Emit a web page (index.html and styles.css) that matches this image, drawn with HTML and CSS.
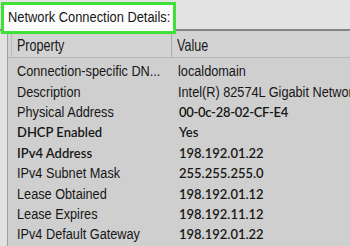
FILE: index.html
```html
<!DOCTYPE html>
<html>
<head>
<meta charset="utf-8">
<link rel="stylesheet" href="styles.css">
</head>
<body>
<div class="window">
  <div class="top">
    <div class="title"><span class="sq-title">Network Connection Details:</span></div>
  </div>
  <div class="main">
    <div class="strip"></div>
    <div class="table">
      <div class="head">
        <div class="hcell prop"><span class="sq-head">Property</span></div>
        <div class="hcell val"><span class="sq-head">Value</span></div>
      </div>
      <div class="rows">
        <div class="row"><span class="p"><span class="sq">Connection-specific DN...</span></span><span class="v"><span class="sq">localdomain</span></span></div>
        <div class="row"><span class="p"><span class="sq">Description</span></span><span class="v"><span class="sq">Intel(R) 82574L Gigabit Network Connection</span></span></div>
        <div class="row"><span class="p"><span class="sq">Physical Address</span></span><span class="v lato hex">00-0c-28-02-CF-E4</span></div>
        <div class="row"><span class="p lato-p">DHCP Enabled</span><span class="v lato">Yes</span></div>
        <div class="row"><span class="p lato-p">IPv4 Address</span><span class="v lato">198.192.01.22</span></div>
        <div class="row"><span class="p"><span class="sq">IPv4 Subnet Mask</span></span><span class="v lato">255.255.255.0</span></div>
        <div class="row"><span class="p"><span class="sq">Lease Obtained</span></span><span class="v lato">198.192.01.12</span></div>
        <div class="row"><span class="p"><span class="sq">Lease Expires</span></span><span class="v lato">198.192.11.12</span></div>
        <div class="row"><span class="p"><span class="sq">IPv4 Default Gateway</span></span><span class="v lato">198.192.01.22</span></div>
      </div>
    </div>
  </div>
</div>
</body>
</html>
```
FILE: styles.css
```css
html, body {
  margin: 0;
  padding: 0;
}
body {
  width: 350px;
  height: 246px;
  overflow: hidden;
  background: #cfcfcf;
  font-family: "Liberation Sans", Arial, sans-serif;
  color: #161616;
}
.window {
  width: 350px;
  height: 246px;
  display: flex;
  flex-direction: column;
  overflow: hidden;
}
.top {
  height: 27px;
  padding: 2px 0 0 1px;
  background: #e3e3e3;
  border-bottom: 2px solid #858585;
  display: flex;
}
.title {
  box-sizing: border-box;
  width: 175px;
  height: 32px;
  margin-bottom: -5px;
  border: 3px solid #3fe03a;
  background: #fdfdfd;
  font-size: 15.5px;
  line-height: 24px;
  padding-left: 4px;
  white-space: nowrap;
  overflow: hidden;
  position: relative;
  z-index: 1;
}
.sq-title {
  display: inline-block;
  transform: scaleX(0.83);
  transform-origin: left center;
}
.main {
  flex: 1;
  display: flex;
}
.strip {
  width: 7px;
  background: #e2e2e2;
  border-right: 1px solid #a0a0a0;
}
.table {
  flex: 1;
  display: flex;
  flex-direction: column;
  min-width: 0;
}
.head {
  height: 26px;
  display: flex;
  border-bottom: 1px solid #b6b6b6;
  background: #d3d3d3;
}
.hcell {
  font-size: 16.5px;
  line-height: 26px;
  padding-top: 1px;
  box-sizing: border-box;
  white-space: nowrap;
}
.sq-head {
  display: inline-block;
  transform: scaleX(0.76);
  transform-origin: left center;
}
.prop {
  width: 161px;
  margin-left: 3px;
  padding-left: 5px;
  border-left: 1px solid #bcbcbc;
  border-right: 1px solid #ababab;
}
.val {
  flex: 1;
  padding-left: 5px;
}
.rows {
  padding-top: 3px;
  display: flex;
  flex-direction: column;
}
.row {
  height: 20.4px;
  display: flex;
  align-items: center;
  white-space: nowrap;
  font-size: 15.5px;
}
.p {
  width: 161px;
  padding-left: 9px;
  flex: none;
}
.v {
  padding-left: 0;
}
.sq {
  display: inline-block;
  transform: scaleX(0.82);
  transform-origin: left center;
}
.lato, .lato-p {
  font-family: Lato, sans-serif;
  font-size: 13px;
  font-weight: 600;
}
.lato {
  padding-left: 1px;
}
.hex {
  letter-spacing: -0.3px;
}
```
